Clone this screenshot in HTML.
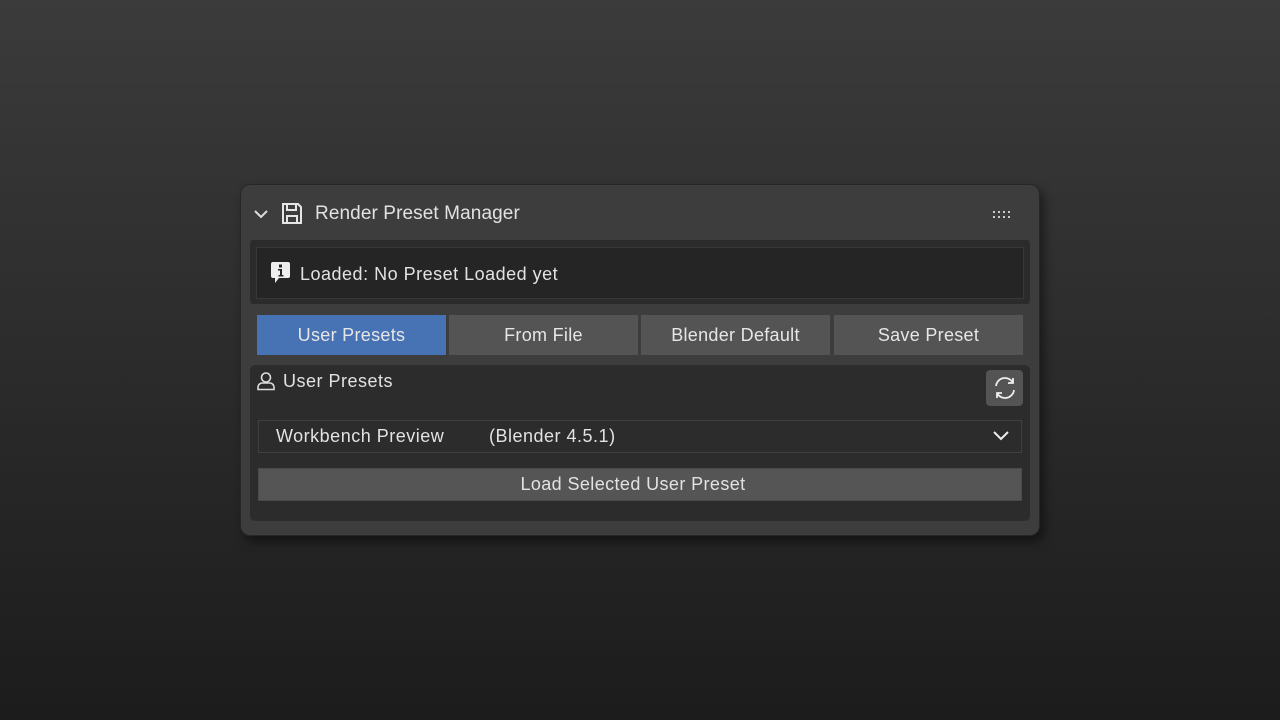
<!DOCTYPE html>
<html><head><meta charset="utf-8"><style>
*{box-sizing:border-box;margin:0;padding:0}
html,body{width:1280px;height:720px;overflow:hidden}
body{background:linear-gradient(#3b3b3b,#1c1c1c);font-family:"Liberation Sans",sans-serif;color:#e2e2e2;position:relative}
.a{position:absolute}
.panel{left:240px;top:184px;width:800px;height:352px;background:#3d3d3d;border:1px solid #262626;border-radius:10px;box-shadow:4px 6px 10px rgba(0,0,0,.45)}
.t{font-size:18px;white-space:nowrap;line-height:20px;letter-spacing:0.5px}
.btn{top:315px;height:40px;background:#545454;font-size:18px;display:flex;align-items:center;justify-content:center;color:#e6e6e6;letter-spacing:0.3px}
</style></head><body>
<div class="a panel"></div>
<svg class="a" style="left:252px;top:207px" width="18" height="14" viewBox="0 0 18 14"><path d="M3 4l6 6 6-6" fill="none" stroke="#ddd" stroke-width="2"/></svg>
<svg class="a" style="left:281px;top:202px" width="22" height="23" viewBox="0 0 22 23"><path d="M2 2h15l3 3v16H2z M6 2v6h9V2 M6 21v-7h10v7" fill="none" stroke="#e6e6e6" stroke-width="2"/></svg>
<div class="a t" style="left:315px;top:204px;font-size:19px;letter-spacing:0.1px">Render Preset Manager</div>
<svg class="a" style="left:992px;top:210px" width="22" height="10"><g fill="#ccc"><rect x="1" y="1" width="2" height="2"/><rect x="6" y="1" width="2" height="2"/><rect x="11" y="1" width="2" height="2"/><rect x="16" y="1" width="2" height="2"/><rect x="1" y="6" width="2" height="2"/><rect x="6" y="6" width="2" height="2"/><rect x="11" y="6" width="2" height="2"/><rect x="16" y="6" width="2" height="2"/></g></svg>
<div class="a" style="left:250px;top:240px;width:780px;height:64px;background:#2b2b2b;border-radius:3px"></div>
<div class="a" style="left:256px;top:247px;width:768px;height:52px;background:#252525;border:1px solid #383838"></div>
<svg class="a" style="left:270px;top:261px" width="22" height="23" viewBox="0 0 22 23"><path d="M3 1h15a2 2 0 0 1 2 2v12a2 2 0 0 1-2 2H9l-4 5v-5H3a2 2 0 0 1-2-2V3a2 2 0 0 1 2-2z" fill="#eee"/><rect x="9" y="3.5" width="3" height="3" fill="#252525"/><path d="M8 8h4v6h1.5v1.5h-5V14H10V9.5H8z" fill="#252525"/></svg>
<div class="a t" style="left:300px;top:264px">Loaded: No Preset Loaded yet</div>
<div class="a btn" style="left:257px;width:189px;background:#4772b3">User Presets</div>
<div class="a btn" style="left:449px;width:189px">From File</div>
<div class="a btn" style="left:641px;width:189px">Blender Default</div>
<div class="a btn" style="left:834px;width:189px">Save Preset</div>
<div class="a" style="left:250px;top:365px;width:780px;height:156px;background:#2c2c2c;border-radius:5px"></div>
<svg class="a" style="left:256px;top:371px" width="20" height="20" viewBox="0 0 20 20"><circle cx="10" cy="6.5" r="4.5" fill="none" stroke="#ddd" stroke-width="1.6"/><path d="M2 18.5v-2.5c0-2 2-4 4-4h8c2 0 4 2 4 4v2.5z" fill="none" stroke="#ddd" stroke-width="1.6"/></svg>
<div class="a t" style="left:283px;top:371px">User Presets</div>
<div class="a" style="left:986px;top:370px;width:37px;height:36px;background:#545454;border-radius:4px"></div>
<svg class="a" style="left:991px;top:374px" width="28" height="28" viewBox="0 0 28 28"><path d="M5 12a9 9 0 0 1 17-3 M22 4v5h-5 M23 16a9 9 0 0 1-17 3 M6 24v-5h5" fill="none" stroke="#eee" stroke-width="1.8"/></svg>
<div class="a" style="left:258px;top:420px;width:764px;height:33px;background:#2c2c2c;border:1px solid #3f3f3f"></div>
<div class="a t" style="left:276px;top:426px">Workbench Preview</div>
<div class="a t" style="left:489px;top:426px">(Blender 4.5.1)</div>
<svg class="a" style="left:992px;top:430px" width="18" height="12" viewBox="0 0 18 12"><path d="M2 2l7 7 7-7" fill="none" stroke="#eee" stroke-width="2"/></svg>
<div class="a" style="left:258px;top:468px;width:764px;height:33px;background:#555;border:1px solid #4a4a4a;display:flex;align-items:center;justify-content:center;font-size:18px;letter-spacing:0.4px;padding-right:14px">Load Selected User Preset</div>
</body></html>
